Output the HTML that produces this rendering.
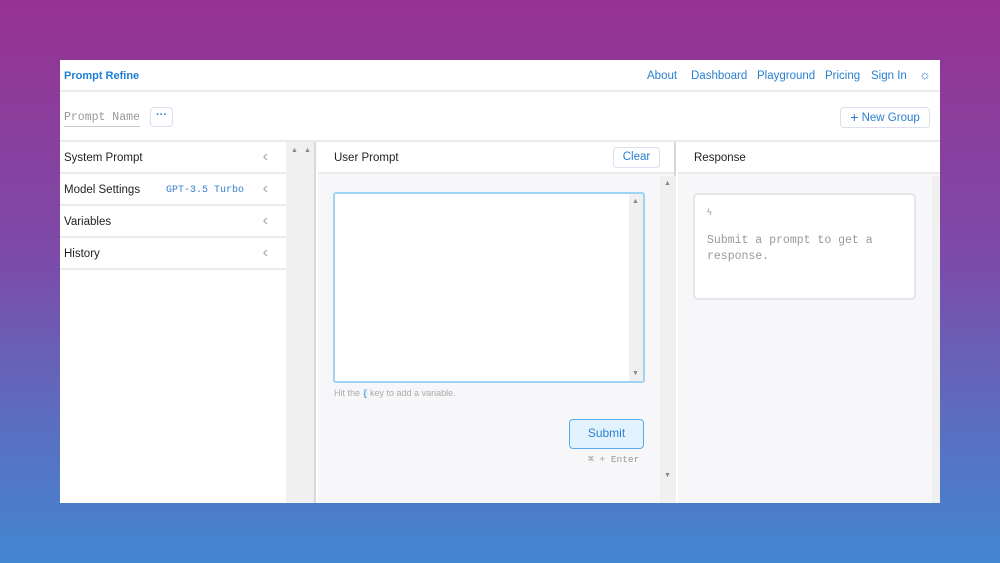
<!DOCTYPE html>
<html><head><style>
*{box-sizing:border-box;margin:0;padding:0}
body{width:1000px;height:563px;overflow:hidden;background:linear-gradient(180deg,#973292 0%,#7d4aa8 45%,#5b6ec0 75%,#4386d2 100%);font-family:"Liberation Sans",sans-serif;position:relative}
.app{position:absolute;left:60px;top:60px;width:880px;height:443px;background:#fff;overflow:hidden}
.hdr{position:absolute;left:0;top:0;width:880px;height:32px;border-bottom:2px solid #ebebef}
.logo{position:absolute;left:4px;top:10px;font-size:11px;font-weight:bold;color:#1f7fd6}
.nav span{position:absolute;top:10px;font-size:11.5px;color:#2a7fd0}
.tb{position:absolute;top:32px;left:0;width:880px;height:50px;border-bottom:2px solid #ebebef}
.pn{position:absolute;left:4px;top:19px;font:11.5px "Liberation Mono",monospace;color:#999;border-bottom:1px solid #ccc;padding-bottom:2px}
.dots{position:absolute;left:90px;top:15px;width:23px;height:20px;border:1px solid #dde;border-radius:4px;color:#2a7fd0;font-size:11px;text-align:center;line-height:15px;font-weight:bold}
.ng{position:absolute;left:780px;top:15px;width:90px;height:21px;border:1px solid #dde;border-radius:4px;color:#2a7fd0;font-size:11.5px;line-height:19px;text-align:center}
.side{position:absolute;left:0;top:82px;width:226px;height:361px}
.row{height:32px;border-bottom:2px solid #ebebef;font-size:11.5px;color:#222;padding:10px 4px 0;position:relative}
.row .c{position:absolute;right:18px;top:6px;color:#aaa;font-size:16px}
.row .m{position:absolute;right:42px;top:11px;font:10px "Liberation Mono",monospace;color:#3a80d0}
.gcol{position:absolute;left:226px;top:82px;width:30px;height:361px;background:#f0f0f0;border-right:2px solid #d8d8dc}
.ar{position:absolute;font-size:7px;color:#888}
.mid{position:absolute;left:258px;top:82px;width:358px;height:361px;background:#f7f7f9;border-right:2px solid #d8d8dc}
.ph{height:32px;background:#fff;border-bottom:2px solid #ebebef;font-size:11.5px;color:#222;padding:10px 16px 0;position:relative}
.clr{position:absolute;right:14px;top:5px;width:47px;height:21px;border:1px solid #dde;border-radius:4px;color:#2a7fd0;text-align:center;line-height:19px;font-size:11.5px}
.ta{position:absolute;left:15px;top:50px;width:312px;height:191px;background:#fff;border:2px solid #9fd3f5;border-radius:3px}
.tsb{position:absolute;right:0;top:0;width:14px;height:187px;background:#f0f0f0}
.hint{position:absolute;left:16px;top:246px;font-size:9px;color:#aaa}
.hint b{color:#2a7fd0;background:#e6f3fb;font-weight:normal;padding:0 1px}
.sub{position:absolute;left:251px;top:277px;width:75px;height:30px;border:1.5px solid #5aaee8;border-radius:4px;background:#e3f3fd;color:#2a7fd0;font-size:12px;text-align:center;line-height:27px}
.ent{position:absolute;left:270px;top:312px;font:9.5px "Liberation Mono",monospace;color:#999}
.msb{position:absolute;left:342px;top:34px;width:16px;height:327px;background:#f0f0f0}
.resp{position:absolute;left:618px;top:82px;width:262px;height:361px;background:#f7f7f9}
.rc{position:absolute;left:15px;top:51px;width:223px;height:107px;background:#fff;border:2px solid #e6e6ea;border-radius:5px}
.rt{position:absolute;left:12px;top:38px;font:11.5px/16px "Liberation Mono",monospace;color:#999;width:205px}
</style></head><body>
<div class="app">
<div class="hdr"><div class="logo">Prompt Refine</div>
<div class="nav"><span style="left:587px">About</span><span style="left:631px">Dashboard</span><span style="left:697px">Playground</span><span style="left:765px">Pricing</span><span style="left:811px">Sign In</span><span style="left:859px;top:7px;font-size:13px">☼</span></div></div>
<div class="tb"><div class="pn">Prompt Name</div><div class="dots">···</div><div class="ng"><span style="font-size:14px;vertical-align:-1px">+</span> New Group</div></div>
<div class="side">
<div class="row">System Prompt<span class="c">‹</span></div>
<div class="row">Model Settings<span class="m">GPT-3.5 Turbo</span><span class="c">‹</span></div>
<div class="row">Variables<span class="c">‹</span></div>
<div class="row">History<span class="c">‹</span></div>
</div>
<div class="gcol"><span class="ar" style="left:5px;top:5px">▲</span><span class="ar" style="left:18px;top:5px">▲</span></div>
<div class="mid">
<div class="ph">User Prompt<div class="clr">Clear</div></div>
<div class="ta"><div class="tsb"><span class="ar" style="left:3px;top:4px">▲</span><span class="ar" style="left:3px;top:176px">▼</span></div></div>
<div class="hint">Hit the <b>{</b> key to add a variable.</div>
<div class="sub">Submit</div>
<div class="ent">⌘ + Enter</div>
<div class="msb"><span class="ar" style="left:4px;top:4px">▲</span><span class="ar" style="left:4px;top:296px">▼</span></div>
</div>
<div class="resp">
<div class="ph" style="padding-left:16px">Response</div>
<div class="rc"><span style="position:absolute;left:12px;top:12px;font-size:9px;color:#999">ϟ</span><div class="rt">Submit a prompt to get a response.</div></div>
<div style="position:absolute;left:254px;top:34px;width:8px;height:327px;background:#f0f0f0"></div>
</div>
</div>
</body></html>
